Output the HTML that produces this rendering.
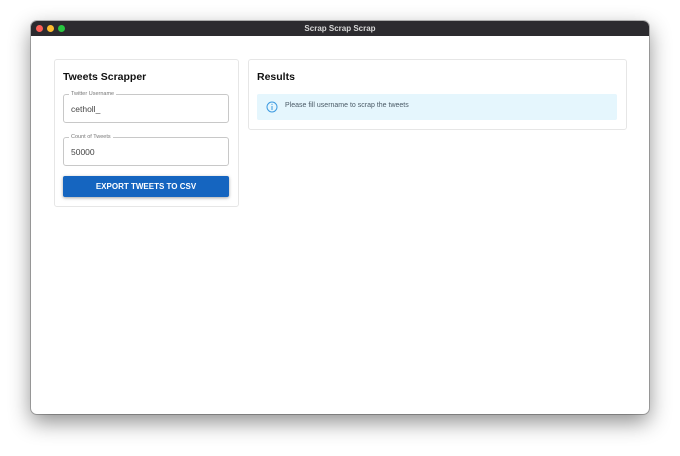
<!DOCTYPE html>
<html><head><style>
body{margin:0;width:680px;height:456px;background:#fff;font-family:"Liberation Sans",sans-serif;position:relative;overflow:hidden}
.win{position:absolute;left:31px;top:21px;width:618px;height:393px;background:#fff;border-radius:6px;box-shadow:0 8px 22px rgba(0,0,0,.45),0 0 0 1px rgba(0,0,0,.25);overflow:hidden}
.tb{height:15px;background:#2c2b2f;color:#d8d8d8;font-size:8px;font-weight:bold;text-align:center;line-height:15px}
.dot{position:absolute;top:4px;width:7px;height:7px;border-radius:50%}
.card{position:absolute;border:1px solid #e6e6e6;border-radius:3px;background:#fff}
h2{margin:0;position:absolute;font-size:10.5px;font-weight:bold;color:#111}
.in{position:absolute;left:8px;width:164px;height:27px;border:1px solid #c8c8c8;border-radius:3px}
.in span{position:absolute;left:5px;top:-4px;background:#fff;padding:0 2px;font-size:5.5px;color:#777}
.in div{position:absolute;left:7px;top:9px;font-size:8.5px;color:#444}
.btn{position:absolute;left:8px;top:116px;width:166px;height:21px;background:#1565c0;border-radius:2px;color:#fff;font-size:8px;font-weight:bold;text-align:center;line-height:21px;box-shadow:0 1px 3px rgba(0,0,0,.35)}
</style></head><body>
<div class="win">
<div class="tb">Scrap Scrap Scrap</div>
<div class="dot" style="left:5px;background:#fe5f57"></div>
<div class="dot" style="left:16px;background:#febc2e"></div>
<div class="dot" style="left:27px;background:#28c840"></div>
<div class="card" style="left:23px;top:38px;width:183px;height:146px">
<h2 style="left:8px;top:11px">Tweets Scrapper</h2>
<div class="in" style="top:34px"><span>Twitter Username</span><div>cetholl_</div></div>
<div class="in" style="top:77px"><span>Count of Tweets</span><div>50000</div></div>
<div class="btn">EXPORT TWEETS TO CSV</div>
</div>
<div class="card" style="left:217px;top:38px;width:377px;height:69px">
<h2 style="left:8px;top:11px">Results</h2>
<div style="position:absolute;left:8px;top:34px;width:360px;height:26px;background:#e5f6fd;border-radius:2px">
<svg style="position:absolute;left:9px;top:7px" width="12" height="12" viewBox="0 0 12 12"><circle cx="6" cy="6" r="5" fill="none" stroke="#3d9ae0" stroke-width="1"/><line x1="6" y1="5" x2="6" y2="9" stroke="#3d9ae0" stroke-width="1"/><circle cx="6" cy="3.3" r=".6" fill="#3d9ae0"/></svg>
<div style="position:absolute;left:28px;top:8px;font-size:7px;color:#4a5a66">Please fill username to scrap the tweets</div>
</div>
</div>
</div>
</body></html>
